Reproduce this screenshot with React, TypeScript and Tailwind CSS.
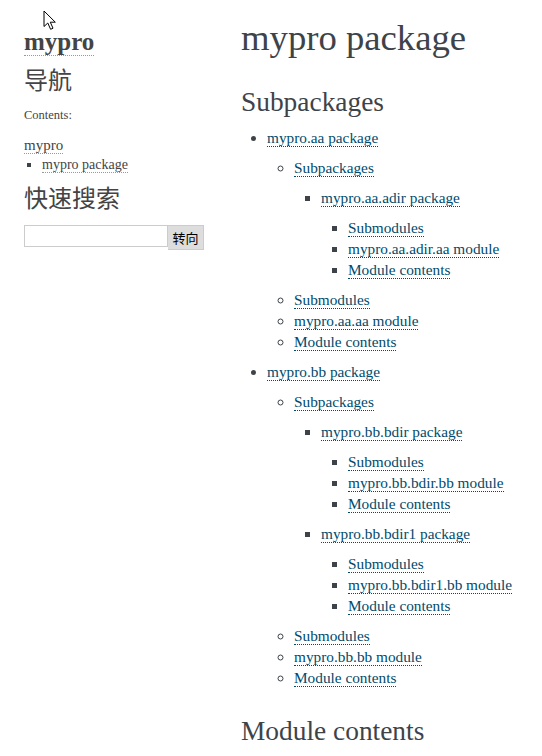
import React from "react";

type Node = { label: string; children?: Node[] };

const tree: Node[] = [
  {
    label: "mypro.aa package",
    children: [
      {
        label: "Subpackages",
        children: [
          {
            label: "mypro.aa.adir package",
            children: [
              { label: "Submodules" },
              { label: "mypro.aa.adir.aa module" },
              { label: "Module contents" },
            ],
          },
        ],
      },
      { label: "Submodules" },
      { label: "mypro.aa.aa module" },
      { label: "Module contents" },
    ],
  },
  {
    label: "mypro.bb package",
    children: [
      {
        label: "Subpackages",
        children: [
          {
            label: "mypro.bb.bdir package",
            children: [
              { label: "Submodules" },
              { label: "mypro.bb.bdir.bb module" },
              { label: "Module contents" },
            ],
          },
          {
            label: "mypro.bb.bdir1 package",
            children: [
              { label: "Submodules" },
              { label: "mypro.bb.bdir1.bb module" },
              { label: "Module contents" },
            ],
          },
        ],
      },
      { label: "Submodules" },
      { label: "mypro.bb.bb module" },
      { label: "Module contents" },
    ],
  },
];

const listClass = [
  "list-disc pl-[26px] mt-[8.7px] mb-[9px]",
  "list-[circle] pl-[27px] my-[9px]",
  "list-[square] pl-[27px] my-[9px]",
  "list-[square] pl-[27px] my-[9px]",
];

function TocList({ items, depth }: { items: Node[]; depth: number }) {
  return (
    <ul className={listClass[depth]}>
      {items.map((item, i) => (
        <li key={i} className="leading-[21px]">
          <a href="#" className="text-[#004B6B] border-b border-dotted border-[#004B6B]">
            {item.label}
          </a>
          {item.children && <TocList items={item.children} depth={depth + 1} />}
        </li>
      ))}
    </ul>
  );
}

function Cursor() {
  return (
    <svg className="absolute left-[43px] top-[10px]" width="15" height="21" viewBox="0 0 15 21">
      <path
        d="M1 1 L1 16.5 L4.8 13 L7.6 19.3 L10 18.2 L7.3 12.2 L12.3 12.2 Z"
        fill="#fff"
        stroke="#000"
        strokeWidth="1"
        strokeLinejoin="miter"
      />
    </svg>
  );
}

export default function App() {
  return (
    <div className="relative flex min-h-screen bg-white text-[#3E4349] font-['Liberation_Serif','Noto_Sans_CJK_SC',serif]">
      <Cursor />

      <div className="w-[241px] shrink-0 pl-[24px]">
        <h1 className="mt-[26.5px] text-[25px] leading-[30px] font-bold text-[#444]">
          <a href="#" className="border-b border-dotted border-[#999]">mypro</a>
        </h1>
        <h3 className="mt-[9px] text-[24px] leading-[30px] font-normal text-[#444]">导航</h3>
        <p className="mt-[11px] text-[12.5px] leading-[16px] text-[#444]">Contents:</p>
        <p className="mt-[13px] text-[15px] leading-[19px]">
          <a href="#" className="text-[#444] border-b border-dotted border-[#999]">mypro</a>
        </p>
        <ul className="list-[square] pl-[18px] text-[14px] leading-[20px]">
          <li>
            <a href="#" className="text-[#444] border-b border-dotted border-[#999]">mypro package</a>
          </li>
        </ul>
        <h3 className="mt-[9px] text-[24px] leading-[30px] font-normal text-[#444]">快速搜索</h3>
        <form className="mt-[11.5px] flex items-start" onSubmit={(e) => e.preventDefault()}>
          <input
            type="text"
            className="w-[144px] h-[22px] border border-[#ccc] bg-white outline-none px-1 text-[14px]"
          />
          <button
            type="submit"
            className="w-[36px] h-[25px] bg-[#ddd] border border-[#ccc] border-l-0 text-[13px] text-black font-['Noto_Sans_CJK_SC',sans-serif] leading-[22px]"
          >
            转向
          </button>
        </form>
      </div>

      <div className="flex-1 min-w-0 text-[15.3px]">
        <h1 className="mt-[16px] text-[36.7px] leading-[44px] font-normal">mypro package</h1>
        <h2 className="mt-[26px] text-[27.4px] leading-[32px] font-normal">Subpackages</h2>
        <TocList items={tree} depth={0} />
        <h2 className="mt-[27.5px] text-[27.4px] leading-[32px] font-normal">Module contents</h2>
      </div>
    </div>
  );
}
